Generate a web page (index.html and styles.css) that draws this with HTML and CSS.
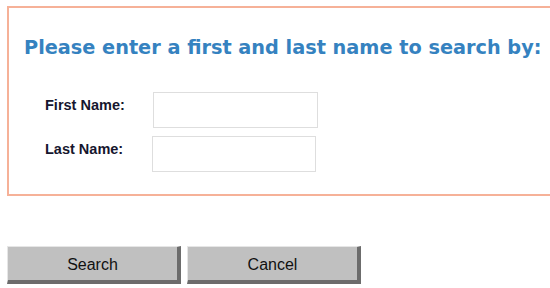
FILE: index.html
```html
<!DOCTYPE html>
<html>
<head>
<meta charset="utf-8">
<link rel="stylesheet" href="styles.css">
</head>
<body>
<div class="panel">
  <h1 class="title">Please enter a first and last name to search by:</h1>
  <div class="fields">
    <label class="label" for="fn">First Name:</label>
    <input class="input" id="fn" type="text">
    <label class="label" for="ln">Last Name:</label>
    <input class="input input-b" id="ln" type="text">
  </div>
</div>
<div class="actions">
  <button class="btn" type="button">Search</button>
  <button class="btn" type="button">Cancel</button>
</div>
</body>
</html>
```
FILE: styles.css
```css
html, body {
  margin: 0;
  padding: 0;
  overflow: hidden;
  background: #fff;
}
body {
  width: 550px;
  height: 288px;
}
.panel {
  box-sizing: border-box;
  margin: 6px 0 0 7px;
  width: 620px;
  border: 2px solid #f6b198;
  padding: 28px 0 22px 15px;
}
.title {
  margin: 0;
  font-family: "DejaVu Sans", Verdana, sans-serif;
  font-weight: bold;
  font-size: 19.3px;
  line-height: 24px;
  color: #3582c0;
  white-space: nowrap;
}
.fields {
  display: grid;
  grid-template-columns: 108px 165px;
  row-gap: 8px;
  margin: 32px 0 0 21px;
}
.label {
  font-family: "Liberation Sans", Arial, sans-serif;
  font-weight: bold;
  font-size: 14.5px;
  line-height: 17px;
  color: #16162e;
  padding-top: 5px;
}
.input {
  box-sizing: border-box;
  width: 165px;
  height: 36px;
  margin: 0;
  border: 1px solid #dedede;
  background: #fff;
}
.input-b {
  margin-left: -1px;
  width: 164px;
}
.actions {
  display: flex;
  gap: 6px;
  margin: 50px 0 0 7px;
}
.btn {
  box-sizing: border-box;
  width: 174px;
  height: 38px;
  margin: 0;
  padding: 3px 0 0;
  background: #c0c0c0;
  border-style: solid;
  border-width: 1px 4px 4px 1px;
  border-color: #e6e6e6 #6c6c6c #6c6c6c #e6e6e6;
  font-family: "Liberation Sans", Arial, sans-serif;
  font-size: 16px;
  color: #111;
}
```
